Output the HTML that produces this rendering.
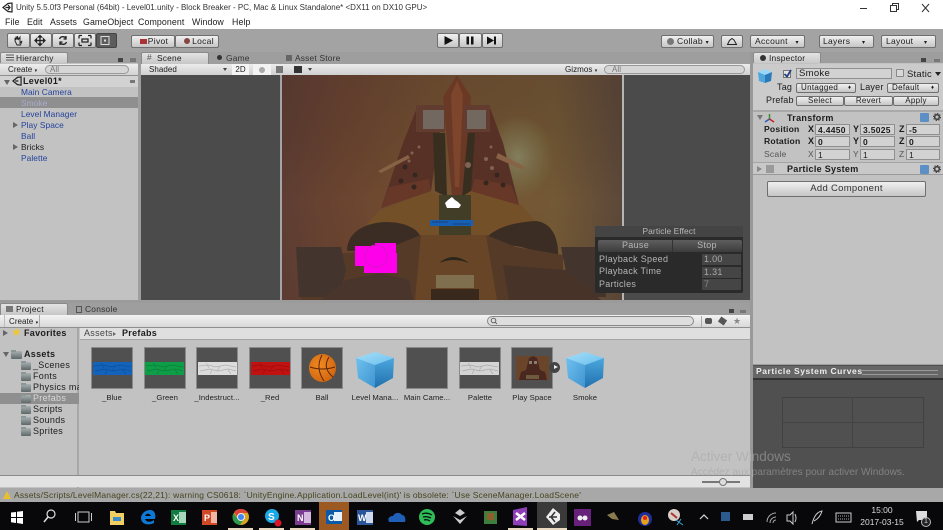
<!DOCTYPE html>
<html><head><meta charset="utf-8"><title>Unity</title>
<style>
html,body{margin:0;padding:0;width:943px;height:530px;overflow:hidden;background:#a2a2a2}
#r{position:relative;width:943px;height:530px;overflow:hidden;filter:blur(.3px);font-family:"Liberation Sans",sans-serif;color:#1c1c1c}
#r div,#r span.a,#r svg.a{position:absolute}
.t{white-space:nowrap;font-size:8.4px;line-height:11px;letter-spacing:.05px}
.b{font-weight:bold;font-size:9px;letter-spacing:.3px}
.w{font-size:9px;letter-spacing:.3px}
.btn{background:linear-gradient(#f0f0f0,#c6c6c6);border:1px solid #6f6f6f;border-radius:2px;box-sizing:border-box;text-align:center;font-size:8px;line-height:10px;letter-spacing:.3px;white-space:nowrap}
.tab{background:linear-gradient(#e4e4e4,#c6c6c6);border:1px solid #8a8a8a;border-bottom:0;box-sizing:border-box;border-radius:2px 2px 0 0}
.f{background:#d2d2d2;border:1px solid #8f8f8f;box-sizing:border-box;font-size:8.5px;line-height:10px;padding-left:2px;letter-spacing:.3px;white-space:nowrap;color:#1a1a1a;font-weight:bold}
.thumb{width:42px;height:42px;top:347px;background:#505050;border:1px solid #8a8a8a;box-sizing:border-box}
.lb{top:392px;width:60px;text-align:center;white-space:nowrap;font-size:7.7px;line-height:11px;letter-spacing:.05px;color:#222}
.blue{color:#24439b}
.fd{width:10px;height:8px;left:21px;background:linear-gradient(#a9b2b2,#5e6868);border-radius:1px}
.fd:before{content:"";position:absolute;left:0;top:-1px;width:5px;height:2px;background:#8d9696}
.br{width:39px;height:13px;top:362px}
.cream{top:528px;height:2px;background:#e8d8c0}
</style></head><body><div id="r">

<svg class="a" width="0" height="0" style="left:0;top:0"><defs>
<path id="crk" d="M1 4 10 3 18 5 27 3 38 5M2 9 12 7 20 9 30 7 38 9M8 1 11 6M22 4 19 9M30 8 33 12M14 8 12 12" fill="none" stroke="#000" stroke-opacity=".2" stroke-width=".7"/>
<linearGradient id="ct" x1="0" y1="0" x2="1" y2="1"><stop offset="0" stop-color="#a5def8"/><stop offset="1" stop-color="#6cc0ee"/></linearGradient>
<linearGradient id="cl" x1="0" y1="0" x2="1" y2="1"><stop offset="0" stop-color="#6fc1ee"/><stop offset="1" stop-color="#3f94d0"/></linearGradient>
<linearGradient id="cr" x1="0" y1="0" x2="0" y2="1"><stop offset="0" stop-color="#4ba7de"/><stop offset="1" stop-color="#2170ad"/></linearGradient>
<g id="cube"><path d="M0 6 19 0 38 6 19 13Z" fill="url(#ct)"/><path d="M0 6 19 13 19 36 2 26Z" fill="url(#cl)"/><path d="M19 13 38 6 37 26 19 36Z" fill="url(#cr)"/></g>
<g id="gear"><circle cx="4" cy="4" r="2.300" fill="none" stroke="#444" stroke-width="1.600"/><circle cx="4" cy="4" r="3.600" fill="none" stroke="#444" stroke-width="1" stroke-dasharray="1.400 1.400"/></g>
</defs></svg>

<div style="left:0;top:0;width:943px;height:29px;background:#fff"></div>
<svg class="a" style="left:2px;top:2px" width="11" height="11" viewBox="0 0 11 11"><path d="M1 5.500 6 1.500 10 1 10 10 6 9.500ZM3.500 5.500H7M6 3 8 5.500 6 8" fill="none" stroke="#222" stroke-width="1.200"/></svg>
<div class="t" style="left:16px;top:2px;color:#333;letter-spacing:0;font-size:8px">Unity 5.5.0f3 Personal (64bit) - Level01.unity - Block Breaker - PC, Mac &amp; Linux Standalone* &lt;DX11 on DX10 GPU&gt;</div>
<div class="t" style="left:5px;top:17px;font-size:8.800px;letter-spacing:.1px">File</div>
<div class="t" style="left:27px;top:17px;font-size:8.800px;letter-spacing:.1px">Edit</div>
<div class="t" style="left:50px;top:17px;font-size:8.800px;letter-spacing:.1px">Assets</div>
<div class="t" style="left:83px;top:17px;font-size:8.800px;letter-spacing:.1px">GameObject</div>
<div class="t" style="left:138px;top:17px;font-size:8.800px;letter-spacing:.1px">Component</div>
<div class="t" style="left:192px;top:17px;font-size:8.800px;letter-spacing:.1px">Window</div>
<div class="t" style="left:232px;top:17px;font-size:8.800px;letter-spacing:.1px">Help</div>
<svg class="a" style="left:860px;top:1px" width="78" height="14" viewBox="0 0 78 14" fill="none" stroke="#333"><path d="M0 7.500H7"/><rect x="30.500" y="4.500" width="6" height="6"/><path d="M32.500 4.500V2.500H38.500V8.500H36.500"/><path d="M62 3l7 8M69 3l-7 8"/></svg>

<!-- toolbar -->
<div style="left:0;top:29px;width:943px;height:23px;background:#a3a3a3"></div>
<div class="btn" style="left:7px;top:33px;width:23px;height:15px"></div>
<div class="btn" style="left:30px;top:33px;width:22px;height:15px"></div>
<div class="btn" style="left:52px;top:33px;width:22px;height:15px"></div>
<div class="btn" style="left:74px;top:33px;width:22px;height:15px"></div>
<div class="btn" style="left:96px;top:33px;width:21px;height:15px;background:#5c5c5c;border-color:#444"></div>
<svg class="a" style="left:7px;top:33px" width="110" height="15" viewBox="0 0 110 15" fill="none" stroke="#222" stroke-width="1.300">
<path d="M8 8V5l1 2V3.500l1.500 3V3l1 3.500L13 4v6l2-2-1.500 4H10Z" stroke-width=".9"/>
<path d="M33 3v9M28.500 7.500h9M33 2.500l-1.500 1.500h3ZM33 12.500l-1.500-1.500h3ZM28 7.500l1.500-1.500v3ZM38 7.500l-1.500-1.500v3Z"/>
<path d="M52.500 6a3.600 3.600 0 0 1 6.500-.5M59.500 9a3.600 3.600 0 0 1-6.500.5M59 3v3h-2.500M53 12V9h2.500"/>
<path d="M72 2.500h3M72 2.500v3M84 2.500h-3M84 2.500v3M72 12.500h3M72 12.500v-3M84 12.500h-3M84 12.500v-3M75 6h6v3h-6z"/>
<rect x="94" y="3.500" width="8" height="8" stroke="#ddd" stroke-width="1"/><rect x="97" y="6.500" width="2" height="2" fill="#ddd" stroke="none"/></svg>
<div class="btn" style="left:131px;top:35px;width:44px;height:13px;line-height:11px;font-size:8.500px;padding-left:10px">Pivot</div>
<div class="btn" style="left:175px;top:35px;width:44px;height:13px;line-height:11px;font-size:8.500px;padding-left:12px">Local</div>
<div style="left:140px;top:39px;width:7px;height:5px;background:#a33"></div>
<div style="left:184px;top:38px;width:6px;height:6px;background:#844;border-radius:3px"></div>

<div class="btn" style="left:437px;top:33px;width:22px;height:15px"></div>
<div class="btn" style="left:459px;top:33px;width:23px;height:15px"></div>
<div class="btn" style="left:482px;top:33px;width:21px;height:15px"></div>
<svg class="a" style="left:437px;top:33px" width="66" height="15" viewBox="0 0 66 15" fill="#111"><path d="M7.500 3 16 7.500 7.500 12Z"/><rect x="29.500" y="3.500" width="2.500" height="8"/><rect x="34" y="3.500" width="2.500" height="8"/><path d="M50 3.500 57 7.500 50 11.500Z"/><rect x="57" y="3.500" width="2" height="8"/></svg>

<div class="btn" style="left:661px;top:35px;width:53px;height:13px;line-height:11px;font-size:8.500px;text-align:left;padding-left:15px">Collab <span style="font-size:6px">▾</span></div>
<div style="left:667px;top:38px;width:7px;height:7px;border-radius:4px;background:#777"></div>
<div class="btn" style="left:721px;top:35px;width:22px;height:13px"></div>
<svg class="a" style="left:726px;top:37px" width="12" height="9" viewBox="0 0 12 9" fill="none" stroke="#222"><path d="M1.500 7.500H10.500L8 3 6 1.500 3.500 3.500Z"/></svg>
<div class="btn" style="left:750px;top:35px;width:55px;height:13px;line-height:11px;font-size:8.500px;text-align:left;padding-left:4px">Account <span style="font-size:6px;margin-left:5px">▾</span></div>
<div class="btn" style="left:819px;top:35px;width:55px;height:13px;line-height:11px;font-size:8.500px;text-align:left;padding-left:3px">Layers <span style="font-size:6px;margin-left:9px">▾</span></div>
<div class="btn" style="left:881px;top:35px;width:55px;height:13px;line-height:11px;font-size:8.500px;text-align:left;padding-left:4px">Layout <span style="font-size:6px;margin-left:8px">▾</span></div>

<!-- Panel bases -->
<div style="left:0;top:52px;width:943px;height:436px;background:#9e9e9e"></div>
<!-- hierarchy -->
<div class="tab" style="left:0;top:52px;width:68px;height:12px"></div>
<div class="t" style="left:16px;top:53px;letter-spacing:.2px">Hierarchy</div>
<svg class="a" style="left:6px;top:54px" width="8" height="7"><path d="M0 1h8M0 3.500h8M0 6h8" stroke="#555"/></svg>
<div style="left:118px;top:58px;width:5px;height:4px;background:#444"></div>
<div style="left:130px;top:58px;width:6px;height:4px;background:#777"></div>
<div style="left:0;top:63px;width:138px;height:237px;background:#c2c2c2"></div>
<div style="left:0;top:64px;width:138px;height:11px;background:linear-gradient(#eee,#d2d2d2);border-bottom:1px solid #8f8f8f"></div>
<div class="t" style="left:8px;top:64px;font-size:8px">Create <span style="font-size:5px">▾</span></div>
<div style="left:45px;top:65px;width:84px;height:9px;border:1px solid #999;border-radius:5px;background:#d6d6d6;box-sizing:border-box"></div>
<div class="t" style="left:50px;top:64px;color:#777;font-size:8px">All</div>
<div style="left:0;top:76px;width:138px;height:11px;background:#d2d2d2"></div>
<div style="left:4px;top:80px;border:3px solid transparent;border-top:5px solid #666"></div>
<svg class="a" style="left:12px;top:76px" width="10" height="10" viewBox="0 0 11 11"><path d="M1 5.500 6 1.500 10 1 10 10 6 9.500ZM3.500 5.500H7" fill="none" stroke="#222" stroke-width="1.300"/></svg>
<div class="t b" style="left:23px;top:76px">Level01*</div>
<div style="left:130px;top:80px;width:5px;height:3px;background:#777"></div>
<div class="t blue" style="left:21px;top:87px">Main Camera</div>
<div style="left:0;top:97px;width:138px;height:11px;background:#8f8f8f"></div>
<div class="t" style="left:21px;top:98px;color:#a7adcf">Smoke</div>
<div class="t blue" style="left:21px;top:109px">Level Manager</div>
<div style="left:13px;top:122px;border:3px solid transparent;border-left:5px solid #666"></div>
<div class="t blue" style="left:21px;top:120px">Play Space</div>
<div class="t blue" style="left:21px;top:131px">Ball</div>
<div style="left:13px;top:144px;border:3px solid transparent;border-left:5px solid #666"></div>
<div class="t" style="left:21px;top:142px">Bricks</div>
<div class="t blue" style="left:21px;top:153px">Palette</div>

<!-- Scene -->
<div class="tab" style="left:141px;top:52px;width:68px;height:12px"></div>
<div class="t" style="left:157px;top:53px;letter-spacing:.2px">Scene</div>
<div class="t" style="left:147px;top:52px;color:#555">#</div>
<div class="t" style="left:226px;top:53px;color:#333;letter-spacing:.2px">Game</div>
<div style="left:217px;top:55px;width:5px;height:5px;border-radius:3px;background:#333"></div>
<div class="t" style="left:295px;top:53px;color:#333;letter-spacing:.2px">Asset Store</div>
<div style="left:286px;top:55px;width:6px;height:6px;background:#666"></div>
<div style="left:141px;top:64px;width:609px;height:11px;background:linear-gradient(#ececec,#cfcfcf)"></div>
<div class="t" style="left:149px;top:64px;font-size:8px">Shaded</div>
<div style="left:223px;top:68px;border:2px solid transparent;border-top:3px solid #444"></div>
<div class="t" style="left:232px;top:64px;width:17px;text-align:center;background:#f5f5f5;font-size:8px">2D</div>
<div style="left:253px;top:64px;width:18px;height:11px;background:#f3f3f3"></div>
<div style="left:259px;top:67px;width:6px;height:6px;background:#aaa;border-radius:3px"></div>
<div style="left:276px;top:66px;width:7px;height:7px;background:#777"></div>
<div style="left:294px;top:66px;width:8px;height:7px;background:#333"></div>
<div style="left:308px;top:68px;border:2px solid transparent;border-top:3px solid #444"></div>
<div class="t" style="left:565px;top:64px;font-size:8px">Gizmos <span style="font-size:5px">▾</span></div>
<div style="left:604px;top:65px;width:141px;height:9px;border:1px solid #999;border-radius:5px;background:#d6d6d6;box-sizing:border-box"></div>
<div class="t" style="left:612px;top:64px;color:#777;font-size:8px">All</div>

<div style="left:141px;top:75px;width:609px;height:225px;background:#4b4b4b"></div>
<svg class="a" style="left:281px;top:75px" width="342" height="225" viewBox="0 0 342 225">
<defs>
<linearGradient id="bg" x1="0" y1="0" x2="1" y2="0"><stop offset="0" stop-color="#5f3b33"/><stop offset=".18" stop-color="#6f432f"/><stop offset=".45" stop-color="#7b5530"/><stop offset=".8" stop-color="#7a5e35"/><stop offset="1" stop-color="#5b483b"/></linearGradient>
<linearGradient id="bg2" x1="0" y1="0" x2="0" y2="1"><stop offset="0" stop-color="#2a1a20" stop-opacity=".22"/><stop offset=".55" stop-color="#000" stop-opacity="0"/><stop offset="1" stop-color="#000" stop-opacity=".05"/></linearGradient>
<radialGradient id="gl"><stop offset="0" stop-color="#8e8e6a"/><stop offset=".6" stop-color="#827c52" stop-opacity=".55"/><stop offset="1" stop-color="#807a4a" stop-opacity="0"/></radialGradient>
</defs>
<rect width="342" height="225" fill="url(#bg)"/><rect width="342" height="225" fill="url(#bg2)"/>
<ellipse cx="237" cy="82" rx="36" ry="42" fill="url(#gl)"/>
<!-- gold plate -->
<path d="M98 136 150 116 168 130 190 116 240 130 258 150 205 162H140L85 150Z" fill="#7a5224"/>
<!-- mask flares -->
<path d="M137 30 122 68 100 133 150 116 158 60 165 34Z" fill="#552a22"/>
<path d="M208 30 222 68 238 130 190 116 186 60 182 34Z" fill="#552a22"/>
<path d="M100 133 108 112 148 104 150 116Z" fill="#6a3423"/><path d="M238 130 230 110 194 104 190 116Z" fill="#6a3423"/>
<path d="M152 58 164 58 166 122 154 116Z" fill="#2c271a"/><path d="M184 58 194 58 190 116 180 122Z" fill="#2c271a"/>
<path d="M162 22 176 0 190 22 181 122H171Z" fill="#6e3522"/>
<path d="M170 20 176 6 182 20 178 112H174Z" fill="#84452a"/>
<path d="M135 30h29v27h-29zM183 30h26v27h-26z" fill="#63392c"/>
<path d="M142 35h21v19h-21z" fill="#79716c"/><path d="M186 35h19v19h-19z" fill="#79716c"/>
<path d="M158 120h32v42h-32z" fill="#3a3a22"/>
<path d="M97 96 127 80 129 83 100 98Z" fill="#93694a"/><path d="M217 78 244 92 242 95 215 83Z" fill="#93694a"/>
<g fill="#2a1d19"><circle cx="124" cy="92" r="2.500"/><circle cx="134" cy="100" r="2.500"/><circle cx="120" cy="106" r="2.500"/><circle cx="133" cy="112" r="2.500"/><circle cx="216" cy="100" r="2.500"/><circle cx="205" cy="108" r="2.500"/><circle cx="222" cy="110" r="2.500"/></g>
<g fill="#8a6b5a"><circle cx="131" cy="78" r="1.500"/><circle cx="138" cy="72" r="1.500"/><circle cx="128" cy="86" r="1.500"/><circle cx="210" cy="72" r="1.500"/><circle cx="205" cy="84" r="2"/><circle cx="211" cy="93" r="2"/><circle cx="187" cy="90" r="3"/></g>
<!-- shoulders -->
<path d="M66 176C66 158 82 148 105 147 125 147 140 155 140 165L118 176Z" fill="#33261f"/>
<path d="M203 166C212 152 235 147 255 146 272 148 278 165 277 182L240 172Z" fill="#33261f"/>
<!-- lower body -->
<path d="M62 178 100 176 140 160 205 160 235 172 282 180V225H20V200Z" fill="#523624"/>
<path d="M140 160 205 160 216 225H134Z" fill="#6b4523"/>
<path d="M15 172H60L65 195 58 222H18Z" fill="#3b302c"/>
<path d="M280 172H325V222H290Z" fill="#3b302c"/>
<path d="M65 205 100 198 128 205 132 225H40Z" fill="#43302a"/>
<path d="M222 190 285 195 320 225H228Z" fill="#402e24"/>
<path d="M158 188Q172 176 188 188Q172 182 158 188Z" fill="#1d1d14"/>
<path d="M155 200h38v13h-38z" fill="#8a7a55"/>
<path d="M150 214h48v11h-48z" fill="#2f2016"/>
<!-- dim veil to mute contrast -->
<rect width="342" height="225" fill="#5e4a38" opacity=".22"/>
<!-- paddle, ball, smoke -->
<rect x="149" y="145" width="43" height="6" fill="#1560b5"/>
<path d="M151 147h16M172 149h17" stroke="#1a3f80" stroke-width="1"/>
<path d="M164 128 167 125 171 122 174 125 177 127 180 130 178 133 166 133Z" fill="#fff"/>
<path d="M74 171H94V168H115V178H116V198H83V191H74Z" fill="#ff00ea"/>
<circle cx="95" cy="181" r="11" fill="none" stroke="#d615c8"/>
</svg>
<div style="left:280px;top:75px;width:1.500px;height:225px;background:#a5a5a5"></div>
<div style="left:622px;top:75px;width:1.500px;height:225px;background:#b5b5b5"></div>

<!-- particle effect -->
<div style="left:595px;top:226px;width:148px;height:67px;background:#2a2a2a;border-radius:2px"></div>
<div style="left:595px;top:226px;width:148px;height:11px;background:#444"></div>
<div class="t" style="left:595px;top:226px;width:148px;text-align:center;color:#b8b8b8;letter-spacing:.1px">Particle Effect</div>
<div style="left:598px;top:240px;width:144px;height:12px;background:linear-gradient(#5e5e5e,#3c3c3c);border-radius:2px"></div>
<div style="left:672px;top:240px;width:1px;height:12px;background:#333"></div>
<div class="t w" style="left:598px;top:240px;width:75px;text-align:center;color:#b5b5b5">Pause</div>
<div class="t w" style="left:672px;top:240px;width:70px;text-align:center;color:#b5b5b5">Stop</div>
<div class="t w" style="left:599px;top:254px;color:#b5b5b5">Playback Speed</div>
<div class="t w" style="left:599px;top:266px;color:#b5b5b5">Playback Time</div>
<div class="t w" style="left:599px;top:279px;color:#b5b5b5">Particles</div>
<div class="t w" style="left:702px;top:254px;width:37px;height:11px;padding-left:2px;background:#454545;color:#aaa">1.00</div>
<div class="t w" style="left:702px;top:267px;width:37px;height:11px;padding-left:2px;background:#454545;color:#aaa">1.31</div>
<div class="t w" style="left:702px;top:279px;width:37px;height:11px;padding-left:2px;background:#454545;color:#888">7</div>

<!-- Project -->
<div style="left:0;top:300px;width:750px;height:3px;background:#9b9b9b"></div>
<div class="tab" style="left:0;top:303px;width:68px;height:12px"></div>
<div class="t" style="left:16px;top:304px;letter-spacing:.25px">Project</div>
<div style="left:6px;top:306px;width:7px;height:6px;background:#777"></div>
<div style="left:76px;top:306px;width:6px;height:7px;border:1px solid #555;box-sizing:border-box"></div>
<div class="t" style="left:85px;top:304px;color:#333;letter-spacing:.25px">Console</div>
<div style="left:729px;top:309px;width:5px;height:4px;background:#444"></div>
<div style="left:740px;top:310px;width:6px;height:3px;background:#777"></div>
<div style="left:0;top:315px;width:750px;height:173px;background:#c2c2c2"></div>
<div style="left:0;top:315px;width:750px;height:12px;background:linear-gradient(#f3f3f3,#d8d8d8);border-bottom:1px solid #8f8f8f"></div>
<div class="t" style="left:9px;top:316px;font-size:8px">Create <span style="font-size:5px">▾</span></div>
<div style="left:4px;top:315px;width:36px;height:12px;border-right:1px solid #aaa;border-left:1px solid #bbb;box-sizing:border-box"></div>
<div style="left:487px;top:316px;width:207px;height:10px;border:1px solid #888;border-radius:5px;background:#dedede;box-sizing:border-box"></div>
<svg class="a" style="left:490px;top:317px" width="8" height="8" fill="none" stroke="#666"><circle cx="3.500" cy="3.500" r="2.300"/><path d="M5 5 7 7"/></svg>
<div style="left:701px;top:316px;width:14px;height:11px;border-left:1px solid #aaa;box-sizing:border-box"></div>
<div style="left:705px;top:318px;width:7px;height:6px;background:#555;border-radius:2px"></div>
<div style="left:719px;top:318px;width:7px;height:6px;background:#555;transform:rotate(35deg)"></div>
<div class="t" style="left:733px;top:316px;color:#888;font-size:9px">★</div>
<div style="left:0;top:328px;width:79px;height:160px;background:#c2c2c2;border-right:2px solid #a8a8a8;box-sizing:border-box"></div>
<div style="left:80px;top:328px;width:670px;height:11px;background:#dfdfdf;border-bottom:1px solid #a5a5a5"></div>
<div class="t w" style="left:84px;top:328px;color:#444">Assets</div>
<div style="left:113px;top:332px;border:2px solid transparent;border-left:3px solid #666"></div>
<div class="t b" style="left:122px;top:328px">Prefabs</div>

<div style="left:3px;top:330px;border:3px solid transparent;border-left:5px solid #666"></div>
<div class="t" style="left:11px;top:327px;color:#f2c52f;font-size:12px;letter-spacing:0">★</div>
<div class="t b" style="left:24px;top:328px">Favorites</div>
<div style="left:3px;top:352px;border:3px solid transparent;border-top:5px solid #666"></div>
<div class="fd" style="left:11px;top:351px;width:11px;height:8px"></div>
<div class="t b" style="left:24px;top:349px">Assets</div>
<div style="left:0;top:393px;width:79px;height:11px;background:#8f8f8f"></div>
<div class="fd" style="top:362px"></div><div class="t w" style="left:33px;top:360px">_Scenes</div>
<div class="fd" style="top:373px"></div><div class="t w" style="left:33px;top:371px">Fonts</div>
<div class="fd" style="top:384px"></div><div class="t w" style="left:33px;top:382px;width:46px;overflow:hidden">Physics mat</div>
<div class="fd" style="top:395px"></div><div class="t w" style="left:33px;top:393px;color:#d8d8d8">Prefabs</div>
<div class="fd" style="top:406px"></div><div class="t w" style="left:33px;top:404px">Scripts</div>
<div class="fd" style="top:417px"></div><div class="t w" style="left:33px;top:415px">Sounds</div>
<div class="fd" style="top:428px"></div><div class="t w" style="left:33px;top:426px">Sprites</div>

<!-- thumbs -->
<div class="thumb" style="left:91px"></div><svg class="a br" style="left:93px;background:#1363bc" viewBox="0 0 39 13"><use href="#crk"/></svg><div class="lb" style="left:82px">_Blue</div>
<div class="thumb" style="left:144px"></div><svg class="a br" style="left:145px;background:#0f9e48" viewBox="0 0 39 13"><use href="#crk"/></svg><div class="lb" style="left:135px">_Green</div>
<div class="thumb" style="left:196px"></div><svg class="a br" style="left:198px;background:#dcdcdc" viewBox="0 0 39 13"><use href="#crk"/></svg><div class="lb" style="left:187px">_Indestruct...</div>
<div class="thumb" style="left:249px"></div><svg class="a br" style="left:251px;background:#c21111" viewBox="0 0 39 13"><use href="#crk"/></svg><div class="lb" style="left:240px">_Red</div>
<div class="thumb" style="left:301px"></div><div style="left:309px;top:354px;width:27px;height:28px;border-radius:50%;background:radial-gradient(circle at 40% 40%,#f08a22,#c85a08)"></div><svg class="a" style="left:309px;top:354px" width="27" height="28" fill="none" stroke="#5a2606"><path d="M1 13Q13 17 26 13M13 1Q6 14 15 27M20 3Q13 14 24 23"/></svg><div class="lb" style="left:292px">Ball</div>
<svg class="a" style="left:356px;top:352px" width="38" height="37"><use href="#cube"/></svg><div class="lb" style="left:345px">Level Mana...</div>
<div class="thumb" style="left:406px"></div><div class="lb" style="left:397px">Main Came...</div>
<div class="thumb" style="left:459px"></div><svg class="a br" style="left:460px;background:#d4d4d4" viewBox="0 0 39 13"><use href="#crk"/></svg><div class="lb" style="left:450px">Palette</div>
<div class="thumb" style="left:511px"></div><svg class="a" style="left:516px;top:356px" width="33" height="24" viewBox="0 0 33 24"><rect width="33" height="24" fill="#6b4529"/><path d="M13 2 17 0 21 2 24 14 29 16 31 24H3L5 16 10 14Z" fill="#4a2820"/><path d="M13 5h3v3h-3zM18 5h3v3h-3z" fill="#8a7a70"/><rect x="10" y="19" width="13" height="4" fill="#6e5a3c"/></svg><div style="left:549px;top:362px;width:11px;height:11px;border-radius:6px;background:#444"></div><div style="left:554px;top:365px;border:2.500px solid transparent;border-left:4px solid #eee"></div><div class="lb" style="left:502px">Play Space</div>
<svg class="a" style="left:566px;top:352px" width="38" height="37"><use href="#cube"/></svg><div class="lb" style="left:555px">Smoke</div>
<div style="left:0;top:475px;width:750px;height:1px;background:#8a8a8a"></div>
<div style="left:0;top:476px;width:750px;height:11px;background:#e2e2e2"></div>
<div style="left:702px;top:481px;width:38px;height:1.500px;background:#777"></div>
<div style="left:719px;top:478px;width:6px;height:6px;border-radius:50%;background:#ddd;border:1px solid #777"></div>

<!-- inspector -->
<div class="tab" style="left:753px;top:52px;width:68px;height:12px"></div>
<div style="left:760px;top:55px;width:6px;height:6px;border-radius:3px;background:#333"></div>
<div class="t" style="left:769px;top:53px;letter-spacing:.2px">Inspector</div>
<div style="left:921px;top:58px;width:5px;height:4px;background:#444"></div>
<div style="left:934px;top:59px;width:6px;height:3px;background:#777"></div>
<div style="left:753px;top:63px;width:190px;height:301px;background:#c2c2c2"></div>
<div style="left:753px;top:64px;width:190px;height:46px;background:#cbcbcb;border-bottom:1px solid #999"></div>
<svg class="a" style="left:757px;top:69px" width="16" height="16" viewBox="0 0 16 16"><path d="M1 3 8 0 15 3 8 6Z" fill="#9ad6f6"/><path d="M1 3 8 6 8 14 2 12Z" fill="#4ea6dc"/><path d="M8 6 15 3 14 12 8 14Z" fill="#2a7ab8"/></svg>
<div style="left:783px;top:70px;width:8px;height:8px;background:#e6e6e6;border:1px solid #777;box-sizing:border-box"></div>
<svg class="a" style="left:783px;top:69px" width="10" height="9"><path d="M1.500 5 4 7.500 8 1" fill="none" stroke="#24437f" stroke-width="1.800"/></svg>
<div class="f" style="left:796px;top:68px;width:96px;height:11px;font-weight:normal;font-size:9.500px;line-height:9px">Smoke</div>
<div style="left:896px;top:69px;width:8px;height:8px;background:#d8d8d8;border:1px solid #888;border-radius:1px;box-sizing:border-box"></div>
<div class="t" style="left:907px;top:69px;font-size:9.500px;letter-spacing:.2px">Static</div>
<div style="left:935px;top:72px;border:3px solid transparent;border-top:4px solid #222"></div>
<div class="t" style="left:777px;top:82px;font-size:9px;letter-spacing:.2px">Tag</div>
<div class="btn" style="left:796px;top:83px;width:60px;height:10px;line-height:8px;text-align:left;padding-left:4px;font-size:8px">Untagged<span class="a" style="left:51px;top:0;font-size:6px">♦</span></div>
<div class="t" style="left:860px;top:82px;font-size:9px;letter-spacing:.2px">Layer</div>
<div class="btn" style="left:887px;top:83px;width:52px;height:10px;line-height:8px;text-align:left;padding-left:4px;font-size:8px">Default<span class="a" style="left:43px;top:0;font-size:6px">♦</span></div>
<div class="t" style="left:766px;top:95px;font-size:9px;letter-spacing:.2px">Prefab</div>
<div class="btn" style="left:796px;top:96px;width:48px;height:10px;line-height:8px">Select</div>
<div class="btn" style="left:844px;top:96px;width:49px;height:10px;line-height:8px">Revert</div>
<div class="btn" style="left:893px;top:96px;width:46px;height:10px;line-height:8px">Apply</div>
<div style="left:753px;top:110px;width:190px;height:2px;background:#a9a9a9"></div>
<div style="left:757px;top:115px;border:3px solid transparent;border-top:5px solid #777"></div>
<svg class="a" style="left:764px;top:113px" width="11" height="10"><path d="M5.500 1V6" stroke="#3c8c34" stroke-width="1.500"/><path d="M5.500 6 1 9" stroke="#2b5fc0" stroke-width="1.500"/><path d="M5.500 6 10 9" stroke="#c82020" stroke-width="1.500"/></svg>
<div class="t b" style="left:787px;top:113px">Transform</div>
<div style="left:920px;top:113px;width:9px;height:9px;background:#5c8fc5;border-radius:1px"></div>
<svg class="a" style="left:933px;top:113px" width="8" height="8"><use href="#gear"/></svg>
<div class="t b" style="left:764px;top:124px;font-size:8.600px;letter-spacing:.2px">Position</div>
<div class="t b" style="left:764px;top:136px;font-size:8.600px;letter-spacing:.2px">Rotation</div>
<div class="t" style="left:764px;top:149px;color:#555;font-size:8.600px;letter-spacing:.2px">Scale</div>
<div class="t b" style="left:808px;top:124px">X</div><div class="f" style="left:815px;top:124px;width:35px;height:11px">4.4450</div>
<div class="t b" style="left:853px;top:124px">Y</div><div class="f" style="left:860px;top:124px;width:35px;height:11px">3.5025</div>
<div class="t b" style="left:899px;top:124px">Z</div><div class="f" style="left:906px;top:124px;width:34px;height:11px">-5</div>
<div class="t b" style="left:808px;top:136px">X</div><div class="f" style="left:815px;top:136px;width:35px;height:11px">0</div>
<div class="t b" style="left:853px;top:136px">Y</div><div class="f" style="left:860px;top:136px;width:35px;height:11px">0</div>
<div class="t b" style="left:899px;top:136px">Z</div><div class="f" style="left:906px;top:136px;width:34px;height:11px">0</div>
<div class="t" style="left:808px;top:149px;color:#555">X</div><div class="f" style="left:815px;top:149px;width:35px;height:11px;font-weight:normal">1</div>
<div class="t" style="left:853px;top:149px;color:#555">Y</div><div class="f" style="left:860px;top:149px;width:35px;height:11px;font-weight:normal">1</div>
<div class="t" style="left:899px;top:149px;color:#555">Z</div><div class="f" style="left:906px;top:149px;width:34px;height:11px;font-weight:normal">1</div>
<div style="left:753px;top:162px;width:190px;height:13px;background:#c8c8c8;border-top:1px solid #a5a5a5;border-bottom:1px solid #9a9a9a;box-sizing:border-box"></div>
<div style="left:757px;top:166px;border:3px solid transparent;border-left:5px solid #888"></div>
<div style="left:766px;top:165px;width:8px;height:8px;background:#9a9a9a"></div>
<div class="t b" style="left:787px;top:164px">Particle System</div>
<div style="left:920px;top:165px;width:9px;height:9px;background:#5c8fc5;border-radius:1px"></div>
<svg class="a" style="left:933px;top:165px" width="8" height="8"><use href="#gear"/></svg>
<div class="btn" style="left:767px;top:181px;width:159px;height:16px;line-height:14px;font-size:9.500px;color:#333">Add Component</div>

<!-- curves -->
<div style="left:753px;top:365px;width:190px;height:123px;background:#505050"></div>
<div style="left:753px;top:366px;width:190px;height:12px;background:#666"></div>
<div class="t b" style="left:756px;top:366px;color:#eee;font-size:8.500px;letter-spacing:.55px">Particle System Curves</div>
<div style="left:862px;top:370px;width:76px;height:3px;border-top:1px solid #999;border-bottom:1px solid #999"></div>
<div style="left:753px;top:378px;width:190px;height:2px;background:#333"></div>
<div style="left:782px;top:397px;width:142px;height:51px;border:1px solid #414141;box-sizing:border-box"></div>
<div style="left:852px;top:397px;width:1px;height:51px;background:#434343"></div>
<div style="left:782px;top:422px;width:142px;height:1px;background:#434343"></div>
<div style="left:750px;top:52px;width:3px;height:436px;background:#999"></div>

<!-- activation -->
<div style="left:691px;top:449px;width:62px;height:32px;overflow:hidden">
<div class="t" style="left:0;top:0;font-size:13.500px;line-height:16px;letter-spacing:0;color:#b2b2b2">Activer Windows</div>
<div class="t" style="left:0;top:18px;font-size:10.100px;line-height:12px;letter-spacing:0;color:#b0b0b0">Accédez aux paramètres pour activer Windows.</div>
</div>
<div style="left:753px;top:449px;width:170px;height:32px;overflow:hidden">
<div class="t" style="left:-62px;top:0;font-size:13.500px;line-height:16px;letter-spacing:0;color:#828282">Activer Windows</div>
<div class="t" style="left:-62px;top:18px;font-size:10.100px;line-height:12px;letter-spacing:0;color:#828282">Accédez aux paramètres pour activer Windows.</div>
</div>

<!-- status -->
<div style="left:0;top:488px;width:943px;height:14px;background:#a8a8a8"></div>
<div style="left:3px;top:491px;border:4px solid transparent;border-bottom:8px solid #e9c02b;border-top:0"></div>
<div class="t" style="left:14px;top:490px;color:#45451f;letter-spacing:.18px;font-size:8.500px">Assets/Scripts/LevelManager.cs(22,21): warning CS0618: `UnityEngine.Application.LoadLevel(int)' is obsolete: `Use SceneManager.LoadScene'</div>

<!-- taskbar -->
<div style="left:0;top:502px;width:943px;height:28px;background:#08080a"></div>
<div style="left:319px;top:502px;width:30px;height:28px;background:#9c5a22"></div>
<div style="left:537px;top:502px;width:30px;height:28px;background:#3a3a3a"></div>
<div class="cream" style="left:228px;width:25px"></div>
<div class="cream" style="left:259px;width:25px"></div>
<div class="cream" style="left:290px;width:25px"></div>
<div class="cream" style="left:508px;width:25px"></div>
<div class="cream" style="left:537px;width:30px"></div>
<svg class="a" style="left:0;top:502px" width="943" height="28" viewBox="0 0 943 28">
<path d="M11 10.500 16 10V15H11ZM17 9.800 23 9V15H17ZM11 16H16V21L11 20.300ZM17 16H23V22L17 21Z" fill="#fff"/>
<circle cx="51" cy="12" r="4" fill="none" stroke="#ddd" stroke-width="1.200"/><path d="M48 15 44 20" stroke="#ddd" stroke-width="1.500"/>
<path d="M78 10h11v10H78zM75.500 11v8M91.500 11v8" fill="none" stroke="#ccc"/>
<path d="M110 9h5l1 2h8v12h-14Z" fill="#f3cf62"/><rect x="113" y="15" width="8" height="4" fill="#3d8dcb"/>
<path d="M150 8C144 8 141 13 141 16 141 22 148 24 154 21V18C150 21 146 20 145 17H155C156 13 155 8 150 8ZM145 14C146 11 150 11 151 14Z" fill="#0e78d6"/>
<rect x="171" y="8" width="15" height="15" fill="#107c41"/><rect x="179" y="10" width="7" height="11" fill="#a8d6bb"/><text x="173" y="19" font-size="9" font-weight="bold" fill="#fff" font-family="Liberation Sans">X</text>
<rect x="202" y="8" width="15" height="15" fill="#d24726"/><rect x="211" y="10" width="6" height="11" fill="#f0b6a5"/><text x="204" y="19" font-size="9" font-weight="bold" fill="#fff" font-family="Liberation Sans">P</text>
<circle cx="241" cy="15" r="8" fill="#d9a520"/><path d="M241 7A8 8 0 0 1 248 11H241A4 4 0 0 0 237 15L234 10A8 8 0 0 1 241 7Z" fill="#db4437"/><path d="M233.500 11A8 8 0 0 0 240 23L244 17 237 16Z" fill="#2c9a4a"/><circle cx="241" cy="15" r="3.500" fill="#4285f4" stroke="#eee"/>
<circle cx="272" cy="14" r="7" fill="#19a9e5"/><text x="268" y="18" font-size="10" font-weight="bold" fill="#fff" font-family="Liberation Sans">S</text><circle cx="278" cy="21" r="3.500" fill="#d8152a"/>
<rect x="295" y="8" width="16" height="15" fill="#7a3d8f"/><rect x="304" y="10" width="7" height="11" fill="#d5b8df"/><text x="297" y="19" font-size="9" font-weight="bold" fill="#fff" font-family="Liberation Sans">N</text>
<rect x="326" y="8" width="16" height="14" fill="#0a5aa8"/><rect x="334" y="10" width="8" height="9" fill="#e6f1fa"/><text x="328" y="19" font-size="9" font-weight="bold" fill="#fff" font-family="Liberation Sans">O</text>
<rect x="357" y="8" width="16" height="15" fill="#2a5699"/><rect x="366" y="10" width="7" height="11" fill="#cfdaf0"/><text x="358" y="19" font-size="9" font-weight="bold" fill="#fff" font-family="Liberation Sans">W</text>
<path d="M389 20C387 16 390 14 393 14 395 10 400 10 402 13 405 13 406 17 405 20Z" fill="#1f5fb5"/>
<circle cx="427" cy="15" r="8" fill="#2ebd59"/><path d="M422 12Q427 10 432 13M423 15Q427 14 431 16M424 18Q427 17 430 19" stroke="#08140c" fill="none" stroke-width="1.300"/>
<path d="M455 11 460 7 465 11 460 14ZM453 14 460 18 467 14 460 22Z" fill="#ccc"/>
<rect x="484" y="9" width="13" height="13" fill="#3d7e3e"/><rect x="487" y="11" width="7" height="7" fill="#8d5f2d"/>
<path d="M513 8 527 5 527 24 513 23Z" fill="#8e3fb8"/><path d="M516 11 525 18M525 11 516 18" stroke="#fff" stroke-width="2.500"/>
<path d="M553 6 560 12V18L553 23 546 15Z" fill="#eee"/><path d="M549 15H557M555 10 551 15 555 20" stroke="#333" fill="none" stroke-width="1.500"/>
<rect x="574" y="7" width="17" height="17" fill="#68217a"/><circle cx="580" cy="16" r="2.500" fill="#eee"/><circle cx="585" cy="16" r="2.500" fill="#eee"/>
<path d="M607 13 614 10 619 18 612 17Z" fill="#8a7a50"/>
<ellipse cx="645" cy="17" rx="7" ry="7" fill="#1d2e9c"/><ellipse cx="645" cy="18" rx="4" ry="5" fill="#e7a21c"/><circle cx="645" cy="16" r="2" fill="#d22"/>
<circle cx="674" cy="13" r="6" fill="#d8d0c8"/><path d="M671 11 677 16" stroke="#a33" stroke-width="2"/><path d="M676 18 683 23M681 17 677 23" stroke="#3da0d8"/>
<path d="M700 17 704 13 708 17" fill="none" stroke="#ddd" stroke-width="1.200"/>
<rect x="721" y="10" width="9" height="9" fill="#2a5a8e"/>
<rect x="743" y="12" width="10" height="6" fill="#ccc"/>
<path d="M767 20A9 9 0 0 1 776 11M770 21A6 6 0 0 1 776 15M773 21A3 3 0 0 1 776 18" fill="none" stroke="#aaa"/>
<path d="M787 13h3l3-3v12l-3-3h-3ZM795 12Q797 16 795 20" fill="none" stroke="#ccc"/>
<path d="M812 22Q815 10 822 9 820 16 814 19" fill="none" stroke="#ccc"/>
<rect x="836" y="11" width="15" height="9" fill="none" stroke="#ccc"/><path d="M838 17h11M838 14h11" stroke="#aaa" stroke-dasharray="1 1"/>
<path d="M916 9H927V18H919L917 20Z" fill="#ddd"/>
<circle cx="926" cy="20" r="4.500" fill="#222" stroke="#bbb"/>
</svg>
<div class="t" style="left:855px;top:505px;width:54px;text-align:center;color:#ddd;letter-spacing:0;font-size:8.500px">15:00</div>
<div class="t" style="left:855px;top:517px;width:54px;text-align:center;color:#ddd;letter-spacing:0;font-size:8.500px">2017-03-15</div>
<div class="t" style="left:922px;top:517px;width:8px;text-align:center;color:#ddd;letter-spacing:0;font-size:7px;line-height:10px">1</div>
</div></body></html>
